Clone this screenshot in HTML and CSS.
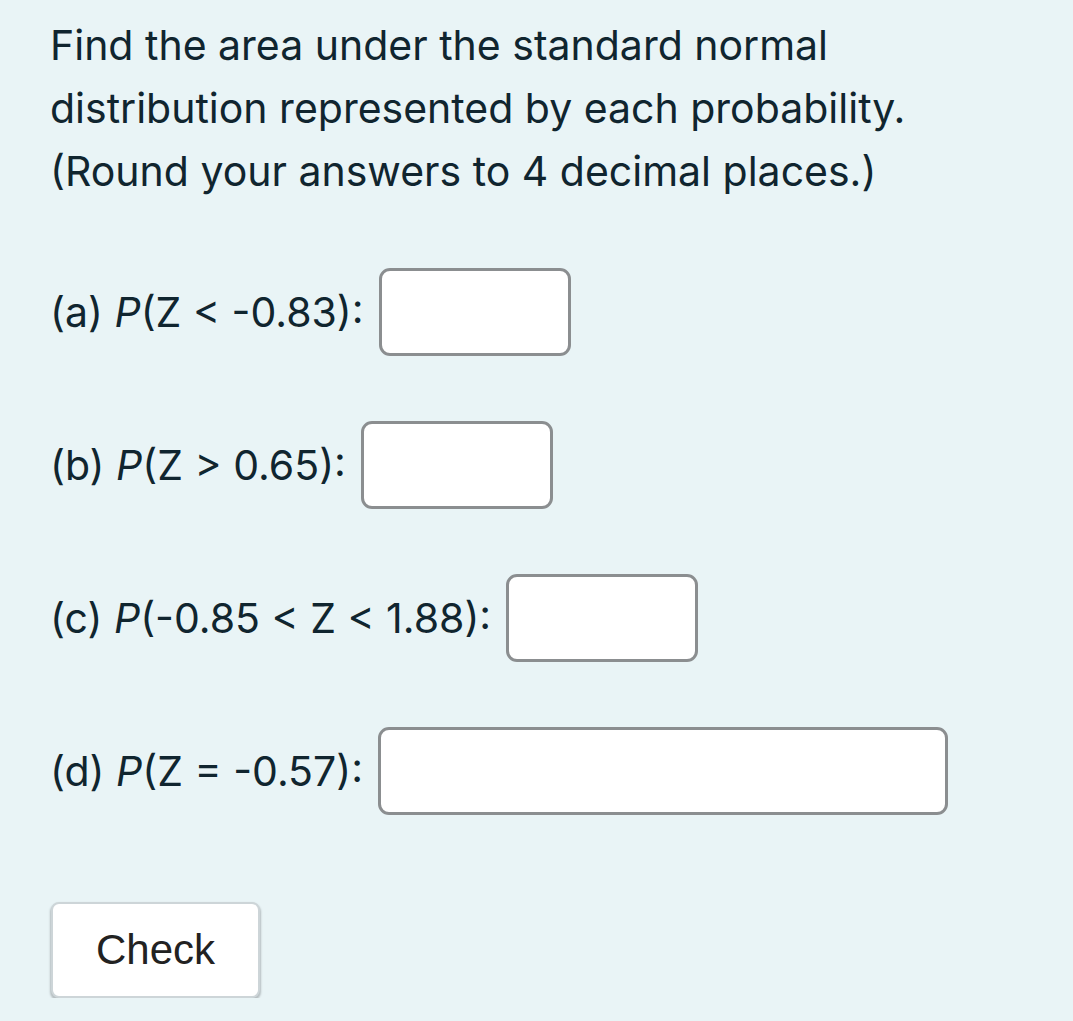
FILE: index.html
```html
<!DOCTYPE html>
<html>
<head>
<meta charset="utf-8">
<link rel="stylesheet" href="styles.css">
</head>
<body>
<div class="page">
  <p class="intro">Find the area under the standard normal<br>distribution represented by each probability.<br>(Round your answers to 4 decimal places.)</p>
  <div class="rows">
    <div class="row"><span class="label">(a) <i>P</i>(Z &lt; -0.83):</span><input class="box" type="text"></div>
    <div class="row"><span class="label">(b) <i>P</i>(Z &gt; 0.65):</span><input class="box" type="text"></div>
    <div class="row"><span class="label">(c) <i>P</i>(-0.85 &lt; Z &lt; 1.88):</span><input class="box" type="text"></div>
    <div class="row"><span class="label">(d) <i>P</i>(Z = -0.57):</span><input class="box wide" type="text"></div>
  </div>
  <button class="check">Check</button>
</div>
</body>
</html>
```

FILE: styles.css
```css
html, body {
  margin: 0;
  padding: 0;
  background: #e9f4f6;
}
.page {
  padding: 14px 0 0 50px;
  font-family: "Inter", "Noto Sans", sans-serif;
  color: #10252f;
  font-size: 41px;
}
.intro {
  margin: 0;
  line-height: 63px;
}
.rows {
  display: flex;
  flex-direction: column;
  gap: 64px;
  margin-top: 64px;
}
.row {
  display: flex;
  align-items: center;
  gap: 15px;
  height: 89px;
}
.label {
  line-height: 48px;
}
.label i {
  font-style: italic;
}
.box {
  box-sizing: border-box;
  width: 192px;
  height: 88px;
  border: 3px solid #8b8e90;
  border-radius: 11px;
  background: #fff;
  outline: none;
}
.box.wide {
  width: 570px;
}
.check {
  margin-top: 87px;
  margin-left: 1px;
  box-sizing: border-box;
  width: 209px;
  height: 96px;
  background: #fff;
  border: 2px solid #cdd5d8;
  border-radius: 8px;
  box-shadow: 0 2px 2px 1px #b6bec1;
  font-family: "Liberation Sans", Arial, sans-serif;
  font-size: 42px;
  color: #222;
  padding: 0;
}
```
